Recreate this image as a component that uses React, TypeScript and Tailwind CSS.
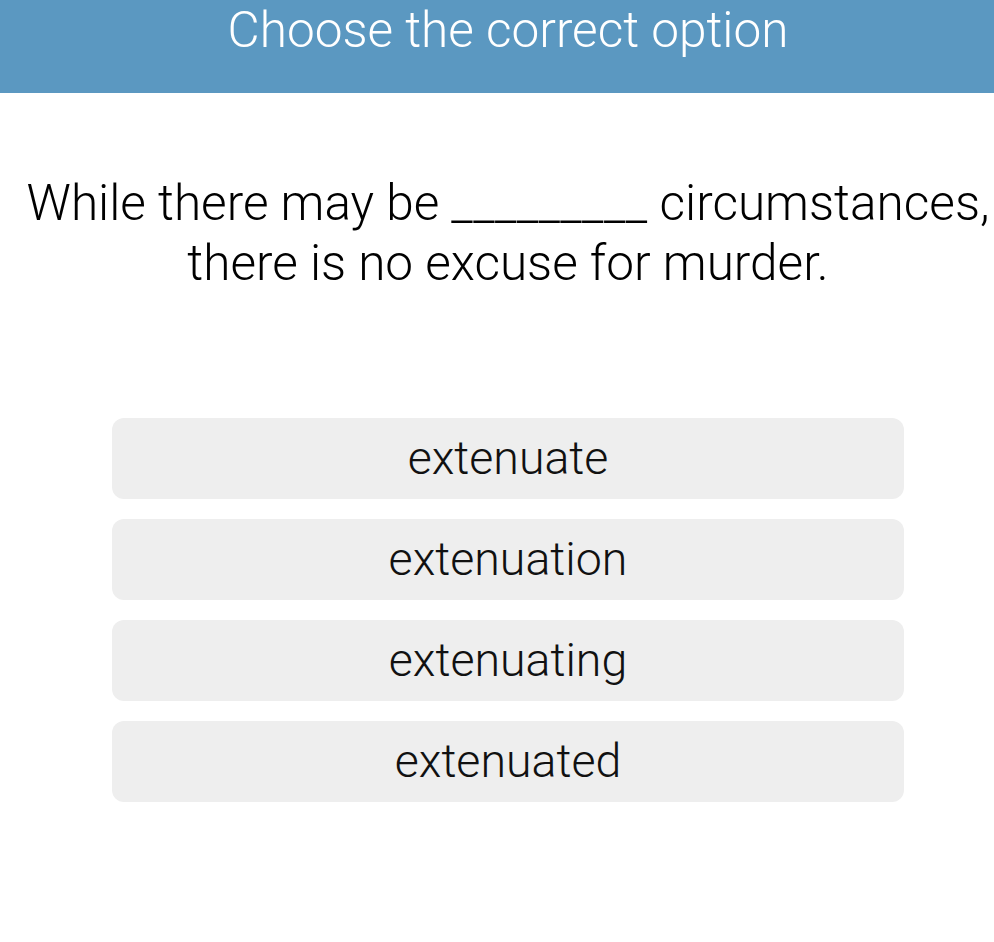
const options = ["extenuate", "extenuation", "extenuating", "extenuated"];

export default function App() {
  return (
    <div className="min-h-screen bg-white font-['Roboto',sans-serif] font-light">
      <header className="h-[93px] bg-[#5b98c1] pl-[22px] text-center">
        <h1 className="text-[49.5px] leading-[60px] text-white">Choose the correct option</h1>
      </header>

      <div className="pl-[22px]">
        <p className="mt-[80px] text-center text-[49.5px] leading-[60px] text-black">
          While there may be <span className="tracking-[0.4px]">_________</span> circumstances, there is no excuse
          for murder.
        </p>

        <div className="mx-auto mt-[125px] flex w-[792px] flex-col gap-5">
          {options.map((opt) => (
            <button
              key={opt}
              className="h-[81px] rounded-xl bg-[#eeeeee] text-center text-[46.5px] text-[#111]"
            >
              {opt}
            </button>
          ))}
        </div>
      </div>
    </div>
  );
}
